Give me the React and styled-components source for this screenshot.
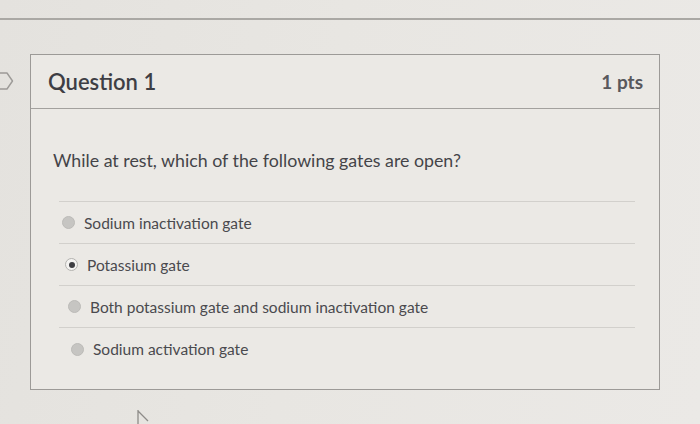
import React from "react";
import styled, { createGlobalStyle } from "styled-components";

const Global = createGlobalStyle`
  html, body { margin: 0; padding: 0; }
  body {
    width: 700px;
    height: 424px;
    overflow: hidden;
    background: linear-gradient(100deg, #e4e2de 0%, #e8e6e2 45%, #ebe9e6 100%);
    font-family: Lato, "Open Sans", sans-serif;
    color: #48484c;
  }
`;

const Page = styled.div`
  position: relative;
  height: 424px;
  padding-top: 18px;
  box-sizing: border-box;
`;

const TopRule = styled.div`
  height: 2px;
  background: #aaa8a4;
  margin-bottom: 34px;
`;

const Row = styled.div`
  display: flex;
  align-items: flex-start;
`;

const FlagSlot = styled.div`
  width: 30px;
  height: 54px;
  display: flex;
  align-items: center;
`;

const Card = styled.section`
  width: 630px;
  height: 336px;
  box-sizing: border-box;
  border: 1.5px solid #9c9a97;
  background: #ebe9e5;
  display: flex;
  flex-direction: column;
`;

const Header = styled.header`
  height: 54px;
  box-sizing: border-box;
  border-bottom: 1.5px solid #a3a19e;
  display: flex;
  align-items: center;
  justify-content: space-between;
  padding: 0 16px 0 17px;
`;

const Title = styled.h2`
  margin: 0;
  font-size: 22px;
  font-weight: 600;
  color: #3e3e44;
`;

const Points = styled.span`
  font-size: 19px;
  font-weight: 700;
  color: #58585c;
`;

const Body = styled.div`
  padding: 40px 24px 0 22px;
`;

const Prompt = styled.p`
  margin: 0 0 30px 0;
  font-size: 17.8px;
  line-height: 22px;
  color: #444448;
`;

const Answers = styled.ul`
  list-style: none;
  margin: 0 0 0 6px;
  padding: 0;
  border-top: 1.5px solid #d2d0cc;
`;

const Answer = styled.li`
  height: 42px;
  box-sizing: border-box;
  display: flex;
  align-items: center;
  gap: 9px;
  padding-left: ${(p) => p.$indent}px;
  border-bottom: ${(p) => (p.$last ? "none" : "1.5px solid #d2d0cc")};
  font-size: 15.5px;
  color: #4a4a4e;
`;

const Radio = styled.span`
  width: 13px;
  height: 13px;
  border-radius: 50%;
  box-sizing: border-box;
  flex: none;
  background: ${(p) => (p.$checked ? "#f4f3f1" : "#c6c5c2")};
  border: 1px solid ${(p) => (p.$checked ? "#b4b3b0" : "#bcbbb8")};
  display: flex;
  align-items: center;
  justify-content: center;
  &::after {
    content: "";
    display: ${(p) => (p.$checked ? "block" : "none")};
    width: 6px;
    height: 6px;
    border-radius: 50%;
    background: #3e3e42;
  }
`;

const Cursor = styled.svg`
  position: absolute;
  left: 137px;
  top: 410px;
`;

const answers = [
  { text: "Sodium inactivation gate", indent: 3 },
  { text: "Potassium gate", indent: 6, checked: true },
  { text: "Both potassium gate and sodium inactivation gate", indent: 9 },
  { text: "Sodium activation gate", indent: 12 },
];

export default function App() {
  return (
    <>
      <Global />
      <Page>
        <TopRule />
        <Row>
          <FlagSlot>
            <svg width="14" height="20" viewBox="0 0 14 20">
              <path
                d="M-2 2 H7 L12.5 10 L7 18 H-2"
                fill="none"
                stroke="#9d9b98"
                strokeWidth="1.4"
                strokeLinejoin="round"
              />
            </svg>
          </FlagSlot>
          <Card>
            <Header>
              <Title>Question 1</Title>
              <Points>1 pts</Points>
            </Header>
            <Body>
              <Prompt>While at rest, which of the following gates are open?</Prompt>
              <Answers>
                {answers.map((a, i) => (
                  <Answer key={a.text} $indent={a.indent} $last={i === answers.length - 1}>
                    <Radio $checked={!!a.checked} />
                    {a.text}
                  </Answer>
                ))}
              </Answers>
            </Body>
          </Card>
        </Row>
        <Cursor width="14" height="14" viewBox="0 0 14 14">
          <path d="M1 0 L1 14 M1 1 L11 11" fill="none" stroke="#8e8c89" strokeWidth="1.3" />
        </Cursor>
      </Page>
    </>
  );
}
